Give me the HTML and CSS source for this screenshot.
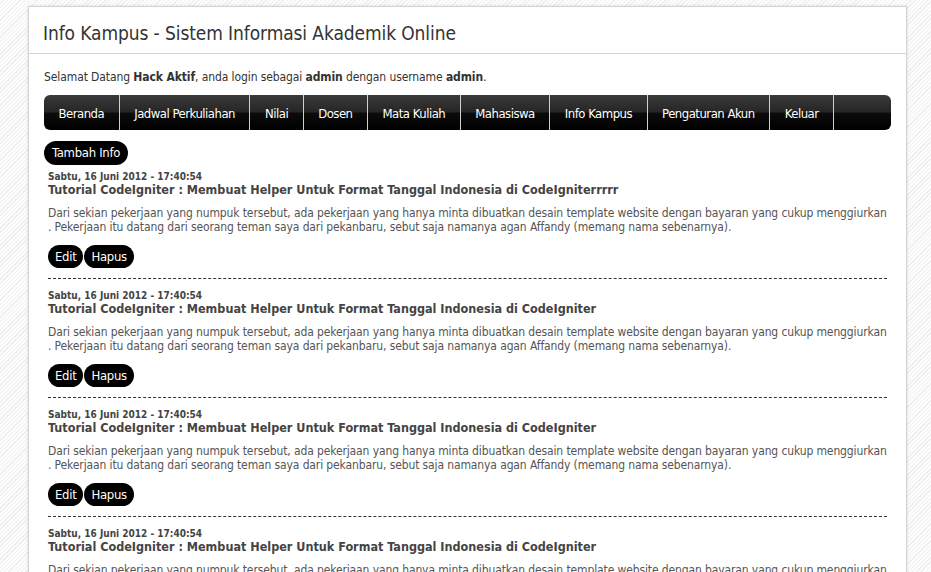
FILE: index.html
```html
<!DOCTYPE html>
<html>
<head>
<meta charset="utf-8">
<title>Info Kampus</title>
<link rel="stylesheet" href="styles.css">
</head>
<body>
<div class="card">
  <div class="card-header">Info Kampus - Sistem Informasi Akademik Online</div>
  <div class="card-body">
    <p class="welcome">Selamat Datang <b>Hack Aktif</b>, anda login sebagai <b>admin</b> dengan username <b>admin</b>.</p>
    <ul class="nav">
      <li>Beranda</li>
      <li>Jadwal Perkuliahan</li>
      <li>Nilai</li>
      <li>Dosen</li>
      <li>Mata Kuliah</li>
      <li>Mahasiswa</li>
      <li>Info Kampus</li>
      <li>Pengaturan Akun</li>
      <li>Keluar</li>
    </ul>
    <div class="toolbar"><span class="btn btn-lg">Tambah Info</span></div>
    <div class="post first">
      <div class="post-date">Sabtu, 16 Juni 2012 - 17:40:54</div>
      <div class="post-title">Tutorial CodeIgniter : Membuat Helper Untuk Format Tanggal Indonesia di CodeIgniterrrrr</div>
      <p class="post-text">Dari sekian pekerjaan yang numpuk tersebut, ada pekerjaan yang hanya minta dibuatkan desain template website dengan bayaran yang cukup menggiurkan . Pekerjaan itu datang dari seorang teman saya dari pekanbaru, sebut saja namanya agan Affandy (memang nama sebenarnya).</p>
      <div class="actions"><span class="btn">Edit</span><span class="btn">Hapus</span></div>
    </div>
    <div class="post">
      <div class="post-date">Sabtu, 16 Juni 2012 - 17:40:54</div>
      <div class="post-title">Tutorial CodeIgniter : Membuat Helper Untuk Format Tanggal Indonesia di CodeIgniter</div>
      <p class="post-text">Dari sekian pekerjaan yang numpuk tersebut, ada pekerjaan yang hanya minta dibuatkan desain template website dengan bayaran yang cukup menggiurkan . Pekerjaan itu datang dari seorang teman saya dari pekanbaru, sebut saja namanya agan Affandy (memang nama sebenarnya).</p>
      <div class="actions"><span class="btn">Edit</span><span class="btn">Hapus</span></div>
    </div>
    <div class="post">
      <div class="post-date">Sabtu, 16 Juni 2012 - 17:40:54</div>
      <div class="post-title">Tutorial CodeIgniter : Membuat Helper Untuk Format Tanggal Indonesia di CodeIgniter</div>
      <p class="post-text">Dari sekian pekerjaan yang numpuk tersebut, ada pekerjaan yang hanya minta dibuatkan desain template website dengan bayaran yang cukup menggiurkan . Pekerjaan itu datang dari seorang teman saya dari pekanbaru, sebut saja namanya agan Affandy (memang nama sebenarnya).</p>
      <div class="actions"><span class="btn">Edit</span><span class="btn">Hapus</span></div>
    </div>
    <div class="post">
      <div class="post-date">Sabtu, 16 Juni 2012 - 17:40:54</div>
      <div class="post-title">Tutorial CodeIgniter : Membuat Helper Untuk Format Tanggal Indonesia di CodeIgniter</div>
      <p class="post-text">Dari sekian pekerjaan yang numpuk tersebut, ada pekerjaan yang hanya minta dibuatkan desain template website dengan bayaran yang cukup menggiurkan . Pekerjaan itu datang dari seorang teman saya dari pekanbaru, sebut saja namanya agan Affandy (memang nama sebenarnya).</p>
      <div class="actions"><span class="btn">Edit</span><span class="btn">Hapus</span></div>
    </div>
  </div>
</div>
</body>
</html>
```
FILE: styles.css
```css
html, body {
  margin: 0;
  padding: 0;
}
body {
  font-family: "DejaVu Sans Condensed", "DejaVu Sans", sans-serif;
  color: #333;
  background-color: #fbfbfb;
  background-image: repeating-linear-gradient(135deg, #fdfdfd 0 2px, #eeeeee 2px 3px);
  height: 572px;
  overflow: hidden;
}
.card {
  margin: 6px 0 0 28px;
  width: 877px;
  background: #fff;
  border: 1px solid #d2d2d2;
  box-shadow: 0 0 3px rgba(0,0,0,0.12);
}
.card-header {
  height: 47px;
  box-sizing: border-box;
  padding: 0 14px;
  font-size: 19px;
  line-height: 52px;
  color: #333;
  border-bottom: 1px solid #d4d4d4;
  letter-spacing: -0.1px;
}
.card-body {
  padding: 14px 15px 0;
}
.welcome {
  margin: 0;
  font-size: 12px;
  line-height: 18px;
  color: #333;
  letter-spacing: -0.1px;
}
.welcome b {
  font-weight: bold;
}
.nav {
  list-style: none;
  margin: 9px 0 0;
  padding: 0;
  display: flex;
  height: 35px;
  border-radius: 6px;
  background: linear-gradient(#3a3a3a 0%, #262626 48%, #0c0c0c 52%, #000 100%);
}
.nav li {
  box-sizing: border-box;
  height: 35px;
  color: #fff;
  font-size: 13px;
  line-height: 35px;
  padding: 1px 14.5px 0;
  border-right: 1px solid #cfcfcf;
  letter-spacing: -0.5px;
}
.toolbar {
  margin-top: 11px;
  display: flex;
}
.btn {
  display: inline-block;
  background: #000;
  color: #fff;
  font-size: 13px;
  height: 23px;
  line-height: 23px;
  padding: 0 7px;
  border-radius: 12px;
  letter-spacing: -0.3px;
}
.btn-lg {
  height: 24px;
  line-height: 24px;
  padding: 0 8px;
}
.post {
  margin: 0 4px;
  padding: 11px 0 10px;
  border-bottom: 1px dashed #333;
}
.post.first {
  padding-top: 6px;
}
.post-date {
  font-weight: bold;
  font-size: 10px;
  line-height: 12px;
  color: #444;
}
.post-title {
  font-weight: bold;
  font-size: 12.5px;
  line-height: 14px;
  color: #444;
}
.post-text {
  margin: 9px 0 0;
  font-size: 12px;
  line-height: 14px;
  color: #555;
  letter-spacing: -0.12px;
}
.actions {
  margin-top: 11px;
  display: flex;
  gap: 1px;
}
```
